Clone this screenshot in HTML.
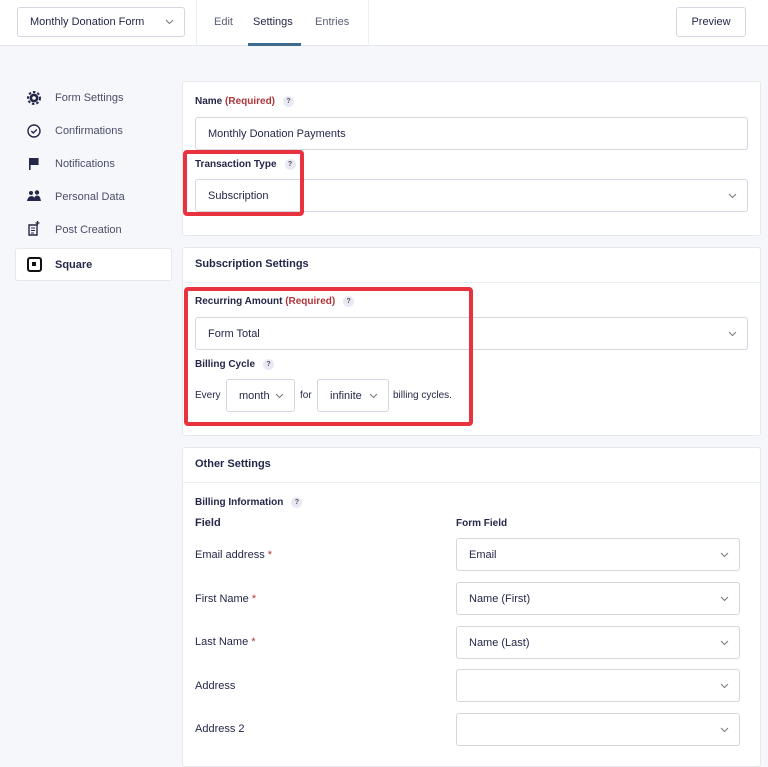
<!DOCTYPE html><html><head><style>
*{box-sizing:border-box;margin:0;padding:0}
body{width:768px;height:753px;overflow:hidden;background:#f6f7fa;font-family:"Liberation Sans",sans-serif;color:#242748;position:relative;font-size:11px}
.a{position:absolute}
.top{left:0;top:0;width:768px;height:46px;background:#fff;border-bottom:1px solid #e4e6ee}
.sel{position:absolute;background:#fff;border:1px solid #d5d7e0;border-radius:3px;font-size:11px;display:flex;align-items:center;padding-left:12px;color:#242748}
.sel svg{position:absolute;right:10px;top:50%;margin-top:-3px}
.card{position:absolute;background:#fff;border:1px solid #e6e8ee;border-radius:3px}
.lbl{position:absolute;font-size:10px;font-weight:bold;color:#242748}
.req{color:#b0363a}
.q{display:inline-block;width:11px;height:11px;border-radius:50%;background:#e8e9f4;font-size:7px;text-align:center;line-height:11px;margin-left:8px;color:#555;vertical-align:1px}
.nav{position:absolute;left:55px;font-size:11px;color:#4a4d68}
.red{position:absolute;border:4px solid #e8323e;border-radius:4px}
.t{position:absolute;font-size:11px}
</style></head><body>
<div class="a top"></div>
<div class="sel" style="left:17px;top:7px;width:168px;height:30px;font-size:11px"><span style="margin-left:0">Monthly Donation Form</span><svg width="9" height="6"><path d="M1 1l3.5 3.5L8 1" stroke="#777" fill="none"/></svg></div>
<div class="a" style="left:196px;top:0;width:1px;height:46px;background:#eceef3"></div>
<div class="a" style="left:368px;top:0;width:1px;height:46px;background:#eceef3"></div>
<div class="t" style="left:214px;top:16px;color:#5a5d75">Edit</div>
<div class="t" style="left:253px;top:16px;color:#242748">Settings</div>
<div class="t" style="left:315px;top:16px;color:#5a5d75">Entries</div>
<div class="a" style="left:248px;top:43px;width:53px;height:3px;background:#3f6b8f"></div>
<div class="sel" style="left:676px;top:7px;width:70px;height:30px;justify-content:center;padding:0">Preview</div>

<svg class="a" style="left:27px;top:91px" width="14" height="150" fill="#242748">
<circle cx="7" cy="7" r="4.5"/><circle cx="7" cy="7" r="6" fill="none" stroke="#242748" stroke-width="2" stroke-dasharray="2.5 2"/><circle cx="7" cy="7" r="1.8" fill="#fff"/>
<circle cx="7" cy="40" r="6" fill="none" stroke="#242748" stroke-width="1.4"/><path d="M4.3 40l2 2 3.5-3.5" stroke="#242748" stroke-width="1.4" fill="none"/>
<path d="M2 67v12h1.6v-5h8v-7z"/>
<circle cx="4" cy="102" r="2"/><circle cx="10" cy="101.5" r="2.2"/><path d="M0 110q1-5 4.5-5t3 5zM6 110q1-5 4-5.5t4 5.5z"/>
<path d="M2 134h8v10H2z" fill="none" stroke="#242748" stroke-width="1.4"/><path d="M4 137h4M4 139.5h4M4 142h3" stroke="#242748"/><path d="M10.5 130v4M8.5 132h4" stroke="#242748" stroke-width="1.3"/>
</svg>
<div class="nav" style="top:92px">Form Settings</div>
<div class="nav" style="top:125px">Confirmations</div>
<div class="nav" style="top:158px">Notifications</div>
<div class="nav" style="top:191px">Personal Data</div>
<div class="nav" style="top:224px">Post Creation</div>
<div class="card" style="left:15px;top:248px;width:157px;height:33px"></div>
<div class="a" style="left:27px;top:257px;width:15px;height:15px;border:2.5px solid #111;border-radius:3px"><div style="margin:3px;width:4px;height:4px;background:#111"></div></div>
<div class="nav" style="top:259px;color:#242748;font-weight:bold;font-weight:600">Square</div>

<div class="card" style="left:182px;top:81px;width:579px;height:155px"></div>
<div class="lbl" style="left:195px;top:96px">Name <span class="req">(Required)</span><span class="q">?</span></div>
<div class="sel" style="left:195px;top:117px;width:553px;height:33px">Monthly Donation Payments</div>
<div class="lbl" style="left:195px;top:159px">Transaction Type<span class="q">?</span></div>
<div class="sel" style="left:195px;top:179px;width:553px;height:33px">Subscription<svg width="9" height="6"><path d="M1 1l3.5 3.5L8 1" stroke="#777" fill="none"/></svg></div>
<div class="red" style="left:183px;top:150px;width:121px;height:66px"></div>

<div class="card" style="left:182px;top:247px;width:579px;height:189px"></div>
<div class="a" style="left:183px;top:282px;width:577px;height:1px;background:#eceef3"></div>
<div class="lbl" style="left:195px;top:258px;font-size:11px">Subscription Settings</div>
<div class="lbl" style="left:195px;top:296px">Recurring Amount <span class="req">(Required)</span><span class="q">?</span></div>
<div class="sel" style="left:195px;top:317px;width:553px;height:33px">Form Total<svg width="9" height="6"><path d="M1 1l3.5 3.5L8 1" stroke="#777" fill="none"/></svg></div>
<div class="lbl" style="left:195px;top:359px">Billing Cycle<span class="q">?</span></div>
<div class="t" style="left:195px;top:390px;font-size:10px">Every</div>
<div class="sel" style="left:226px;top:379px;width:69px;height:33px">month<svg width="9" height="6"><path d="M1 1l3.5 3.5L8 1" stroke="#777" fill="none"/></svg></div>
<div class="t" style="left:300px;top:390px;font-size:10px">for</div>
<div class="sel" style="left:317px;top:379px;width:72px;height:33px">infinite<svg width="9" height="6"><path d="M1 1l3.5 3.5L8 1" stroke="#777" fill="none"/></svg></div>
<div class="t" style="left:393px;top:390px;font-size:10px">billing cycles.</div>
<div class="red" style="left:184px;top:287px;width:289px;height:139px"></div>

<div class="card" style="left:182px;top:447px;width:579px;height:320px"></div>
<div class="a" style="left:183px;top:482px;width:577px;height:1px;background:#eceef3"></div>
<div class="lbl" style="left:195px;top:458px;font-size:11px">Other Settings</div>
<div class="lbl" style="left:195px;top:497px">Billing Information<span class="q">?</span></div>
<div class="lbl" style="left:195px;top:517px;font-size:11px">Field</div>
<div class="lbl" style="left:456px;top:518px">Form Field</div>
<div class="t" style="left:195px;top:549px">Email address <span class="req">*</span></div>
<div class="t" style="left:195px;top:593px">First Name <span class="req">*</span></div>
<div class="t" style="left:195px;top:636px">Last Name <span class="req">*</span></div>
<div class="t" style="left:195px;top:680px">Address</div>
<div class="t" style="left:195px;top:723px">Address 2</div>
<div class="sel" style="left:456px;top:538px;width:284px;height:33px">Email<svg width="9" height="6"><path d="M1 1l3.5 3.5L8 1" stroke="#777" fill="none"/></svg></div>
<div class="sel" style="left:456px;top:582px;width:284px;height:33px">Name (First)<svg width="9" height="6"><path d="M1 1l3.5 3.5L8 1" stroke="#777" fill="none"/></svg></div>
<div class="sel" style="left:456px;top:626px;width:284px;height:33px">Name (Last)<svg width="9" height="6"><path d="M1 1l3.5 3.5L8 1" stroke="#777" fill="none"/></svg></div>
<div class="sel" style="left:456px;top:669px;width:284px;height:33px"><svg width="9" height="6"><path d="M1 1l3.5 3.5L8 1" stroke="#777" fill="none"/></svg></div>
<div class="sel" style="left:456px;top:713px;width:284px;height:33px"><svg width="9" height="6"><path d="M1 1l3.5 3.5L8 1" stroke="#777" fill="none"/></svg></div>
</body></html>
